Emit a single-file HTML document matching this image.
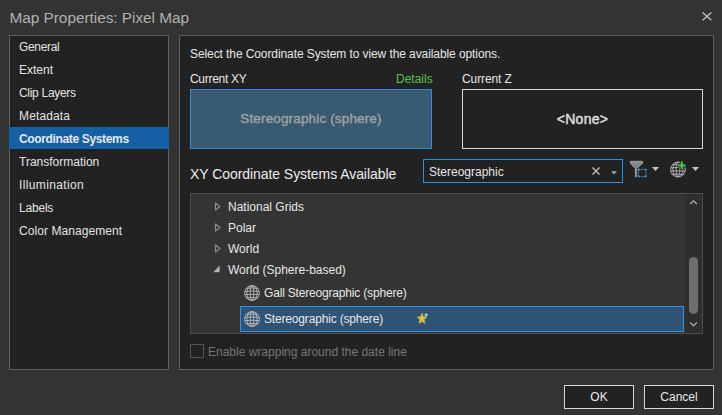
<!DOCTYPE html>
<html><head><meta charset="utf-8">
<style>
*{box-sizing:border-box;margin:0;padding:0}
html,body{width:722px;height:415px;overflow:hidden;background:#333333}
body{position:relative;font-family:"Liberation Sans",sans-serif;font-size:12px;color:#e6e6e6}
.a{position:absolute;white-space:nowrap}
svg.a{overflow:visible}
.title{left:9.5px;top:9px;font-size:15.4px;letter-spacing:-0.04px;color:#b0b0b0;line-height:18px}
.panel{background:#222222;border:1px solid #5e5e5e}
.nav{left:9px;top:35px;width:160px;height:335px}
.navitem{left:19px;font-size:12px;line-height:14px;color:#e2e2e2}
.sel{left:9px;top:127px;width:160px;height:22px;background:#155fa5}
.right{left:179px;top:35px;width:535px;height:335px}
.t12{font-size:12px;line-height:14px}
.xybox{left:190px;top:89px;width:242px;height:60px;background:#395b71;border:1px solid #3a8ad6}
.zbox{left:462px;top:89px;width:241px;height:60px;background:#222;border:1px solid #d6d6d6}
.search{left:423px;top:159px;width:200px;height:24px;background:#212121;border:1px solid #2092f0}
.tree{left:190px;top:193px;width:513px;height:141px;background:#343434;border:1px solid #4c4c4c}
.track{left:685px;top:194px;width:17px;height:139px;background:#2e2e2e}
.thumb{left:689px;top:257px;width:9px;height:57px;background:#6e6e6e;border-radius:5px}
.selrow{left:240px;top:306px;width:444px;height:26px;background:#2f5375;border:1px solid #2494f0}
.btn{background:#222;border:1px solid #d8d8d8;text-align:center;line-height:22px;font-size:12px;color:#e8e8e8}
</style></head><body>
<div class="a title">Map Properties: Pixel Map</div>
<svg class="a" style="left:702px;top:12px" width="10" height="9" viewBox="0 0 10 9"><path d="M0.6 0.5L9.4 8.2M9.4 0.5L0.6 8.2" stroke="#c4c4c4" stroke-width="1.3"/></svg>

<div class="a panel nav"></div>
<div class="a sel"></div>
<div class="a navitem" style="top:40px;letter-spacing:-0.33px">General</div>
<div class="a navitem" style="top:63px">Extent</div>
<div class="a navitem" style="top:86px;letter-spacing:-0.3px">Clip Layers</div>
<div class="a navitem" style="top:109px;letter-spacing:0.14px">Metadata</div>
<div class="a navitem" style="top:132px;font-weight:bold;letter-spacing:-0.35px;color:#e4e8ee">Coordinate Systems</div>
<div class="a navitem" style="top:155px">Transformation</div>
<div class="a navitem" style="top:178px;letter-spacing:0.36px">Illumination</div>
<div class="a navitem" style="top:201px;letter-spacing:-0.2px">Labels</div>
<div class="a navitem" style="top:224px;letter-spacing:0.07px">Color Management</div>

<div class="a panel right"></div>
<div class="a t12" style="left:190px;top:47px;letter-spacing:-0.09px">Select the Coordinate System to view the available options.</div>
<div class="a t12" style="left:190px;top:72px;letter-spacing:-0.3px">Current XY</div>
<div class="a t12" style="left:396px;top:72px;color:#55c04e">Details</div>
<div class="a t12" style="left:462px;top:72px;letter-spacing:-0.1px">Current Z</div>
<div class="a xybox"></div>
<div class="a" style="left:190px;top:111px;width:242px;text-align:center;font-size:13.4px;font-weight:normal;letter-spacing:0.2px;-webkit-text-stroke:0.4px #9ea2a6;line-height:16px;color:#9ea2a6">Stereographic (sphere)</div>
<div class="a zbox"></div>
<div class="a" style="left:462px;top:111px;width:241px;text-align:center;font-size:14px;font-weight:normal;letter-spacing:0.3px;-webkit-text-stroke:0.4px #e0e0e0;line-height:17px;color:#e0e0e0">&lt;None&gt;</div>

<div class="a" style="left:190px;top:166px;font-size:14px;line-height:16px;color:#ececec;letter-spacing:-0.06px">XY Coordinate Systems Available</div>
<div class="a search"></div>
<div class="a t12" style="left:429px;top:165px">Stereographic</div>
<svg class="a" style="left:592px;top:167px" width="8" height="8" viewBox="0 0 8 8"><path d="M0.5 0.5L7.5 7.5M7.5 0.5L0.5 7.5" stroke="#b4b4b4" stroke-width="1.6"/></svg>
<svg class="a" style="left:611px;top:171px" width="6" height="4" viewBox="0 0 6 4"><path d="M0 0.2H6L3 3.6Z" fill="#a8a8a8"/></svg>

<!-- filter icon -->
<svg class="a" style="left:629px;top:160px" width="20" height="19" viewBox="0 0 20 19">
  <defs><linearGradient id="fg" x1="0" y1="0" x2="0" y2="1"><stop offset="0" stop-color="#909090"/><stop offset="1" stop-color="#5c5c5c"/></linearGradient></defs>
  <path d="M1.3 1.3H13.7V3.2L7.7 8.6V16.8H6.3V8.6L1.3 3.2Z" fill="url(#fg)" stroke="#a4a4a4" stroke-width="0.9" stroke-linejoin="round"/>
  <path d="M9.6 9.3H17V16.7H9.6Z" fill="none" stroke="#38a2ec" stroke-width="1.3" stroke-dasharray="1.9 1.2 1.2 1.2 1.9 0"/>
</svg>
<svg class="a" style="left:652px;top:167px" width="7" height="4" viewBox="0 0 7 4"><path d="M0 0H7L3.5 4Z" fill="#c8c8c8"/></svg>
<!-- globe plus -->
<svg class="a" style="left:670px;top:161px" width="17" height="17" viewBox="0 0 17 17">
  <g fill="none" stroke="#b0b0b0" stroke-width="0.95" transform="translate(0 0.5)">
   <circle cx="8" cy="8" r="7.4"/>
   <ellipse cx="8" cy="8" rx="5.1" ry="7.4"/>
   <ellipse cx="8" cy="8" rx="1.8" ry="7.4"/>
   <path d="M2.2 3.4Q8 2.4 13.8 3.4M0.9 6.4Q8 5.6 15.1 6.4M0.7 9.6Q8 9 15.3 9.6M1.6 12.8Q8 12.4 14.4 12.8"/>
  </g>
  <path d="M11.8 0.3V8.3M7.8 4.3H15.8" stroke="#222" stroke-width="4.2"/>
  <path d="M11.8 0.6V8M8.1 4.3H15.5" stroke="#4cbd4c" stroke-width="2.2"/>
</svg>
<svg class="a" style="left:692px;top:167px" width="7" height="4" viewBox="0 0 7 4"><path d="M0 0H7L3.5 4Z" fill="#c8c8c8"/></svg>

<div class="a tree"></div>
<div class="a track"></div>
<div class="a thumb"></div>
<svg class="a" style="left:689px;top:199px" width="9" height="6" viewBox="0 0 9 6"><path d="M1.2 5L4.5 1.7L7.8 5" fill="none" stroke="#bdbdbd" stroke-width="1.15"/></svg>
<svg class="a" style="left:689px;top:321px" width="9" height="6" viewBox="0 0 9 6"><path d="M1.2 1.5L4.5 4.8L7.8 1.5" fill="none" stroke="#bdbdbd" stroke-width="1.15"/></svg>

<svg class="a" style="left:214px;top:202px" width="7" height="9" viewBox="0 0 7 9"><path d="M1.5 1V8L6 4.5Z" fill="none" stroke="#8c8c8c" stroke-width="1.2" stroke-linejoin="round"/></svg>
<div class="a t12" style="left:228px;top:200px">National Grids</div>
<svg class="a" style="left:214px;top:223px" width="7" height="9" viewBox="0 0 7 9"><path d="M1.5 1V8L6 4.5Z" fill="none" stroke="#8c8c8c" stroke-width="1.2" stroke-linejoin="round"/></svg>
<div class="a t12" style="left:228px;top:221px">Polar</div>
<svg class="a" style="left:214px;top:244px" width="7" height="9" viewBox="0 0 7 9"><path d="M1.5 1V8L6 4.5Z" fill="none" stroke="#8c8c8c" stroke-width="1.2" stroke-linejoin="round"/></svg>
<div class="a t12" style="left:228px;top:242px">World</div>
<svg class="a" style="left:212.5px;top:265px" width="7" height="8" viewBox="0 0 7 8"><path d="M6.6 0.4V7.2H0.2Z" fill="#b0b0b0"/></svg>
<div class="a t12" style="left:228px;top:263px">World (Sphere-based)</div>

<svg class="a" style="left:244px;top:285px" width="16" height="16" viewBox="0 0 16 16">
  <g fill="none" stroke="#b4b4b4" stroke-width="0.95">
   <circle cx="8" cy="8" r="7.4"/>
   <ellipse cx="8" cy="8" rx="5.1" ry="7.4"/>
   <ellipse cx="8" cy="8" rx="1.8" ry="7.4"/>
   <path d="M2.2 3.4Q8 2.4 13.8 3.4M0.9 6.4Q8 5.6 15.1 6.4M0.7 9.6Q8 9 15.3 9.6M1.6 12.8Q8 12.4 14.4 12.8"/>
  </g>
</svg>
<div class="a t12" style="left:264px;top:286px;letter-spacing:-0.18px">Gall Stereographic (sphere)</div>
<div class="a selrow"></div>
<svg class="a" style="left:244px;top:311px" width="16" height="16" viewBox="0 0 16 16">
  <g fill="none" stroke="#b4b4b4" stroke-width="0.95">
   <circle cx="8" cy="8" r="7.4"/>
   <ellipse cx="8" cy="8" rx="5.1" ry="7.4"/>
   <ellipse cx="8" cy="8" rx="1.8" ry="7.4"/>
   <path d="M2.2 3.4Q8 2.4 13.8 3.4M0.9 6.4Q8 5.6 15.1 6.4M0.7 9.6Q8 9 15.3 9.6M1.6 12.8Q8 12.4 14.4 12.8"/>
  </g>
</svg>
<div class="a t12" style="left:264px;top:312px;letter-spacing:-0.17px">Stereographic (sphere)</div>
<svg class="a" style="left:416px;top:312px" width="14" height="13" viewBox="0 0 14 13">
  <path d="M6.00 1.10L7.38 4.70L10.88 5.04L8.23 7.60L9.02 11.41L6.00 9.40L2.98 11.41L3.77 7.60L1.12 5.04L4.62 4.70Z" fill="#d6c23a" stroke="#d6c23a" stroke-width="0.5" stroke-linejoin="round"/>
  <path d="M10.2 1.3L10.6 2.6L11.9 3L10.6 3.4L10.2 4.7L9.8 3.4L8.5 3L9.8 2.6Z" fill="#c8c8c8" stroke="#c8c8c8" stroke-width="0.8"/>
</svg>

<div class="a" style="left:190px;top:344px;width:14px;height:14px;border:1px solid #555"></div>
<div class="a t12" style="left:208px;top:345px;color:#767676">Enable wrapping around the date line</div>

<div class="a btn" style="left:564px;top:385px;width:70px;height:24px">OK</div>
<div class="a btn" style="left:644px;top:385px;width:70px;height:24px">Cancel</div>
</body></html>
